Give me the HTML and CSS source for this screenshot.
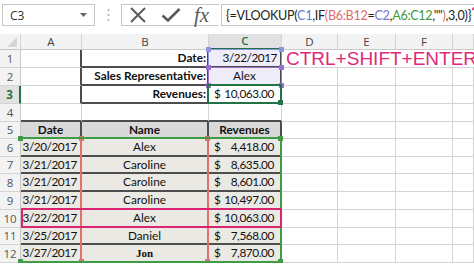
FILE: index.html
```html
<!DOCTYPE html>
<html>
<head>
<meta charset="utf-8">
<link rel="stylesheet" href="styles.css">
</head>
<body>
<div class="fbar">
  <div class="namebox"><span>C3</span><svg class="nb-arrow" width="7" height="4" viewBox="0 0 7 4"><path d="M0 0 H7 L3.5 4 Z" fill="#666"/></svg></div>
  <div class="sep"><svg width="3" height="14" viewBox="0 0 3 14"><circle cx="1.5" cy="2" r="1" fill="#aaa"/><circle cx="1.5" cy="7" r="1" fill="#aaa"/><circle cx="1.5" cy="12" r="1" fill="#aaa"/></svg></div>
  <div class="btns">
    <svg width="18" height="18" viewBox="0 0 18 18"><path d="M2 2 L16 16 M16 2 L2 16" stroke="#5a5a5a" stroke-width="2" fill="none"/></svg>
    <svg width="20" height="16" viewBox="0 0 20 16"><path d="M1.5 8.5 L7 13.5 L18.5 2" stroke="#5a5a5a" stroke-width="2.6" fill="none"/></svg>
    <span class="fx">fx</span>
  </div>
  <div class="formula">
    <span class="ftext">{=VLOOKUP(<span class="k1">C1</span>,IF<span class="k2">(B6:B12</span>=<span class="k3">C2</span>,<span class="k4">A6:C12</span>,""<span class="k2">)</span>,3,0)}</span>
    <svg class="uparrow" width="12" height="22" viewBox="0 0 12 22"><path d="M6 2 V21 M1 7 L6 2 L11 7" stroke="#e0287a" stroke-width="1.6" fill="none"/></svg>
  </div>
</div>

<div class="sheetwrap">
  <div class="cells">
    <div class="corner"><svg width="10" height="10" viewBox="0 0 10 10"><path d="M10 0 V10 H0 Z" fill="#d6d6d6"/></svg></div>
    <div class="h">A</div>
    <div class="h">B</div>
    <div class="h hsel">C</div>
    <div class="h">D</div>
    <div class="h">E</div>
    <div class="h">F</div>
    <div class="h"></div>

    <div class="rh">1</div>
    <div class="c lb"></div>
    <div class="c tb lbl">Date:</div>
    <div class="c tb ref r">3/22/2017</div>
    <div class="c big">CTRL+SHIFT+ENTER</div>

    <div class="rh">2</div>
    <div class="c lb"></div>
    <div class="c tb lbl">Sales Representative:</div>
    <div class="c tb ref m">Alex</div>
    <div class="c"></div><div class="c"></div><div class="c"></div><div class="c"></div>

    <div class="rh rsel">3</div>
    <div class="c lb"></div>
    <div class="c tb lbl">Revenues:</div>
    <div class="c tb acc"><span>$</span><span>10,063.00</span></div>
    <div class="c"></div><div class="c"></div><div class="c"></div><div class="c"></div>

    <div class="rh">4</div>
    <div class="c bb"></div>
    <div class="c bb"></div>
    <div class="c bb"></div>
    <div class="c"></div><div class="c"></div><div class="c"></div><div class="c"></div>

    <div class="rh">5</div>
    <div class="c t th">Date</div>
    <div class="c t th">Name</div>
    <div class="c t th">Revenues</div>
    <div class="c"></div><div class="c"></div><div class="c"></div><div class="c"></div>

    <div class="rh">6</div>
    <div class="c t td r">3/20/2017</div>
    <div class="c t td m">Alex</div>
    <div class="c t td acc"><span>$</span><span>4,418.00</span></div>
    <div class="c"></div><div class="c"></div><div class="c"></div><div class="c"></div>

    <div class="rh">7</div>
    <div class="c t td r">3/21/2017</div>
    <div class="c t td m">Caroline</div>
    <div class="c t td acc"><span>$</span><span>8,635.00</span></div>
    <div class="c"></div><div class="c"></div><div class="c"></div><div class="c"></div>

    <div class="rh">8</div>
    <div class="c t td r">3/21/2017</div>
    <div class="c t td m">Caroline</div>
    <div class="c t td acc"><span>$</span><span>8,601.00</span></div>
    <div class="c"></div><div class="c"></div><div class="c"></div><div class="c"></div>

    <div class="rh">9</div>
    <div class="c t td r">3/21/2017</div>
    <div class="c t td m">Caroline</div>
    <div class="c t td acc"><span>$</span><span>10,497.00</span></div>
    <div class="c"></div><div class="c"></div><div class="c"></div><div class="c"></div>

    <div class="rh">10</div>
    <div class="c t td r">3/22/2017</div>
    <div class="c t td m">Alex</div>
    <div class="c t td acc"><span>$</span><span>10,063.00</span></div>
    <div class="c"></div><div class="c"></div><div class="c"></div><div class="c"></div>

    <div class="rh">11</div>
    <div class="c t td r">3/25/2017</div>
    <div class="c t td m">Daniel</div>
    <div class="c t td acc"><span>$</span><span>7,568.00</span></div>
    <div class="c"></div><div class="c"></div><div class="c"></div><div class="c"></div>

    <div class="rh">12</div>
    <div class="c t td r">3/27/2017</div>
    <div class="c t td m jon">Jon</div>
    <div class="c t td acc"><span>$</span><span>7,870.00</span></div>
    <div class="c"></div><div class="c"></div><div class="c"></div><div class="c"></div>
  </div>

  <div class="overlays">
    <div class="ov ov-c1"><i class="sq tl"></i><i class="sq tr"></i></div>
    <div class="ov ov-c2"><i class="sq tl"></i><i class="sq tr"></i><i class="sq bl"></i><i class="sq br"></i></div>
    <div class="ov ov-act"><i class="sq br"></i></div>
    <div class="ov ov-red"><i class="sq tl"></i><i class="sq tr"></i><i class="sq bl"></i><i class="sq br"></i></div>
    <div class="ov ov-green"><i class="sq tl"></i><i class="sq tr"></i><i class="sq bl"></i><i class="sq br"></i></div>
    <div class="ov ov-pink"></div>
  </div>
</div>
</body>
</html>
```

FILE: styles.css
```css
* { box-sizing: border-box; margin: 0; padding: 0; }
html, body { width: 474px; height: 269px; overflow: hidden; background: #fff; }
body { font-family: Lato, "Open Sans", sans-serif; color: #111; }

/* formula bar */
.fbar { display: flex; align-items: center; height: 27px; padding: 3px 0 0 2px; background: #fff; }
.namebox { width: 93px; height: 22px; border: 1px solid #c6c6c6; background: #fff; display: flex; align-items: center; justify-content: space-between; padding: 0 7px 0 7px; font-family: "Open Sans", sans-serif; font-size: 12px; color: #333; }
.sep { width: 26px; display: flex; justify-content: center; align-items: center; }
.btns { width: 98px; height: 22px; border: 1px solid #c6c6c6; border-right: none; display: flex; align-items: center; padding-left: 7px; gap: 14px; background: #fff; }
.fx { font-family: "Liberation Serif", serif; font-style: italic; font-size: 21px; color: #5a5a5a; margin-left: -1px; line-height: 1; }
.formula { flex: 1; height: 22px; border: 1px solid #c6c6c6; border-right: none; margin-left: 2px; display: flex; align-items: center; padding-left: 4px; white-space: nowrap; overflow: hidden; background: #fff; }
.ftext { font-size: 12.6px; letter-spacing: -0.3px; color: #222; }
.k1 { color: #5b7fd4; }
.k2 { color: #de6b6b; }
.k3 { color: #7d74d0; }
.k4 { color: #3f9a3f; }
.uparrow { margin-left: auto; margin-right: 2px; flex: none; margin-top: -2px; }

/* sheet */
.sheetwrap { display: grid; margin-top: 7px; overflow: hidden; }
.cells, .overlays {
  grid-area: 1 / 1;
  display: grid;
  grid-template-columns: 21px 61px 127px 73px 56px 58px 57px 21px;
  grid-template-rows: 16px 18px 18px 18px 18px 17px 18px 17px 18px 18px 18px 17px 18px;
}
.overlays { pointer-events: none; }

.corner { background: #f3f3f3; border-right: 1px solid #d4d4d4; border-bottom: 1px solid #c8c8c8; display: flex; align-items: flex-end; justify-content: flex-end; padding: 0 3px 2px 0; }
.h { background: #f3f3f3; border-right: 1px solid #d4d4d4; border-bottom: 1px solid #c8c8c8; display: flex; align-items: center; justify-content: center; font-family: "Open Sans", sans-serif; font-size: 11.5px; line-height: 1; color: #444; }
.hsel { background: #e1e1e1; color: #217346; font-weight: 600; border-bottom: 2px solid #217346; }
.rh { background: #f3f3f3; border-right: 1px solid #c8c8c8; border-bottom: 1px solid #d4d4d4; display: flex; align-items: center; justify-content: center; font-family: "Open Sans", sans-serif; font-size: 11.5px; line-height: 1; color: #555; }
.rsel { background: #e1e1e1; color: #217346; font-weight: 700; border-right: 2px solid #217346; }

.c { border-right: 1px solid #d4d4d4; border-bottom: 1px solid #d4d4d4; display: flex; align-items: center; padding: 0 2px; white-space: nowrap; font-size: 11.8px; line-height: 1; min-width: 0; }
.r { justify-content: flex-end; letter-spacing: -0.45px; padding-right: 3px; }
.m { justify-content: center; }
.lbl { justify-content: flex-end; font-weight: 700; padding-right: 1px; }
.lb { border-right: 2px solid #4d4d4d; }
.bb { border-bottom: 2px solid #4d4d4d; }
.tb, .t { border-right: 2px solid #4d4d4d; border-bottom: 2px solid #4d4d4d; }
.ref { background: #efedf9; }
.acc { justify-content: space-between; padding: 0 6px 0 5px; letter-spacing: -0.4px; }
.th { background: #d9d9d9; font-weight: 700; justify-content: center; }
.td { background: #ebe9e3; }
.jon { font-family: "Liberation Serif", serif; font-weight: 700; font-size: 11px; }
.big { grid-column: span 4; border-right: none; font-family: "Liberation Sans", Arial, sans-serif; font-size: 19px; line-height: 1; color: #e0287a; padding-left: 4px; overflow: visible; }

/* range overlays */
.ov { position: relative; }
.ov-c1 { grid-column: 4; grid-row: 2; border: 1px solid #8b97dd; margin: -1px 0 0 -1px; }
.ov-c2 { grid-column: 4; grid-row: 3; border: 1px solid #9a70cf; margin: -1px 0 0 -1px; }
.ov-act { grid-column: 4; grid-row: 4; border: 2px solid #217346; margin: -2px 0 0 -2px; }
.ov-red { grid-column: 3; grid-row: 7 / 14; border: 2px solid #e2716c; margin: -2px 0 0 -2px; }
.ov-green { grid-column: 2 / 5; grid-row: 7 / 14; border: 2px solid #3f9c45; border-left: none; margin: -2px 0 0 0; }
.ov-pink { grid-column: 2 / 5; grid-row: 11; border: 2px solid #d9246f; margin: -2px 0 0 0; }

.sq { position: absolute; width: 5px; height: 5px; display: block; }
.sq.tl { left: -3px; top: -3px; }
.sq.tr { right: -3px; top: -3px; }
.sq.bl { left: -3px; bottom: -3px; }
.sq.br { right: -3px; bottom: -3px; }
.ov-c1 .sq { background: #8b97dd; }
.ov-c2 .sq { background: #9a70cf; }
.ov-act .sq { background: #217346; }
.ov-red .sq { background: #e2716c; }
.ov-green .sq { background: #3f9c45; }
```
